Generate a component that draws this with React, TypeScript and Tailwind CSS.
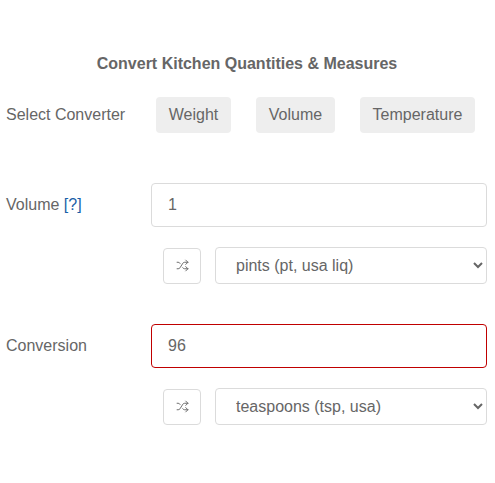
import { Shuffle } from 'lucide-react';

const tabs = [
  { label: 'Weight', width: 'w-[75px]' },
  { label: 'Volume', width: 'w-[79px]' },
  { label: 'Temperature', width: 'w-[115px]' },
];

function UnitRow({ unit }: { unit: string }) {
  return (
    <div className="flex items-center pl-[163px] pr-2">
      <button
        type="button"
        className="mr-[14px] flex h-9 w-[38px] items-center justify-center rounded border border-[#dbdbdb] bg-white text-[#666]"
      >
        <Shuffle size={13} strokeWidth={1.75} />
      </button>
      <select
        defaultValue={unit}
        className="h-[37px] flex-1 rounded border border-[#dbdbdb] bg-white pl-4 text-base text-[#666]"
      >
        <option>{unit}</option>
      </select>
    </div>
  );
}

export default function App() {
  return (
    <div className="min-h-[483px] bg-white pt-[55px] font-['Liberation_Sans',Arial,sans-serif] text-base text-[#666]">
      <h1 className="pr-px text-center text-base leading-[18px] font-bold">
        Convert Kitchen Quantities &amp; Measures
      </h1>

      <div className="mt-[24px] flex items-center pl-1.5">
        <span className="w-[150px]">Select Converter</span>
        <div className="flex gap-[25px]">
          {tabs.map((tab) => (
            <button
              key={tab.label}
              type="button"
              className={`h-9 rounded bg-[#eeeeee] text-center text-base text-[#666] ${tab.width}`}
            >
              {tab.label}
            </button>
          ))}
        </div>
      </div>

      <div className="mt-[50px] flex items-center pr-2 pl-1.5">
        <label className="w-[145px]">
          Volume <span className="text-[#1a5fa8]">[?]</span>
        </label>
        <input
          defaultValue="1"
          className="h-11 flex-1 rounded border border-[#dbdbdb] pl-4 text-base text-[#666]"
        />
      </div>
      <div className="mt-5">
        <UnitRow unit="pints (pt, usa liq)" />
      </div>

      <div className="mt-10 flex items-center pr-2 pl-1.5">
        <label className="w-[145px]">Conversion</label>
        <input
          defaultValue="96"
          className="h-11 flex-1 rounded border border-[#c00000] pl-4 text-base text-[#666]"
        />
      </div>
      <div className="mt-5">
        <UnitRow unit="teaspoons (tsp, usa)" />
      </div>
    </div>
  );
}
